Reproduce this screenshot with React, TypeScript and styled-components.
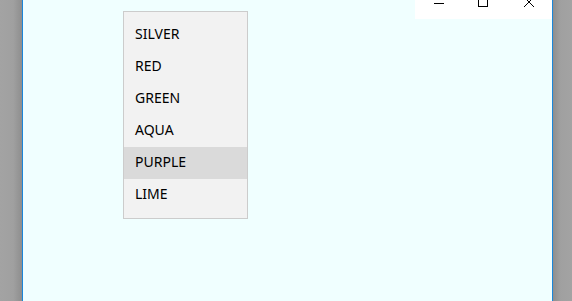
import styled, { createGlobalStyle } from "styled-components"

const GlobalStyle = createGlobalStyle`
  html, body {
    margin: 0;
    padding: 0;
    width: 572px;
    height: 301px;
    overflow: hidden;
  }
  #root {
    height: 100%;
  }
`

const Desktop = styled.div`
  display: flex;
  width: 572px;
  height: 301px;
  background-color: #a0a0a0;
`

const Shadow = styled.div<{ side: "left" | "right" }>`
  width: ${props => props.side === "left" ? 22 : 19}px;
  flex-shrink: 0;
  background: linear-gradient(
    ${props => props.side === "left" ? "to right" : "to left"},
    #a3a3a3 0%,
    #a0a0a0 60%,
    #8e8e8e 100%
  );
`

const Window = styled.div`
  position: relative;
  flex: 1;
  border-left: solid 1px #1a86d9;
  border-right: solid 1px #1a86d9;
  background-color: #f0ffff;
  padding: 11px 0 0 100px;
  font-family: "Noto Sans", "Open Sans", sans-serif;
`

const CaptionButtons = styled.div`
  position: absolute;
  top: 0;
  right: 0;
  display: flex;
  height: 19px;
  background-color: #ffffff;
`

const CaptionButton = styled.div`
  position: relative;
  width: 46px;
  height: 19px;
  overflow: hidden;
  svg {
    position: absolute;
    left: 18px;
    top: -3px;
  }
  &:first-child {
    width: 45px;
    svg {
      left: 19px;
    }
  }
`

const List = styled.div`
  width: 123px;
  padding: 7px 0;
  border: solid 1px #cccccc;
  background-color: #f2f2f2;
`

const Item = styled.div<{ selected?: boolean }>`
  box-sizing: border-box;
  display: flex;
  align-items: center;
  height: 32px;
  padding: 0 0 3px 11px;
  font-size: 14px;
  color: #000000;
  background-color: ${props => props.selected ? "#dadada" : "transparent"};
`

const colors = ["SILVER", "RED", "GREEN", "AQUA", "PURPLE", "LIME"]

export default function App() {
  return (
    <>
      <GlobalStyle />
      <Desktop>
        <Shadow side="left" />
        <Window>
          <CaptionButtons>
            <CaptionButton>
              <svg width="10" height="10" viewBox="0 0 10 10">
                <path d="M0 6.5H10" stroke="#000" strokeWidth="1" />
              </svg>
            </CaptionButton>
            <CaptionButton>
              <svg width="10" height="10" viewBox="0 0 10 10">
                <rect x="0.5" y="0.5" width="9" height="9" fill="none" stroke="#000" strokeWidth="1" />
              </svg>
            </CaptionButton>
            <CaptionButton>
              <svg width="10" height="10" viewBox="0 0 10 10">
                <path d="M0 0L10 10M10 0L0 10" stroke="#000" strokeWidth="1" />
              </svg>
            </CaptionButton>
          </CaptionButtons>
          <List>
            {colors.map(c => (
              <Item key={c} selected={c === "PURPLE"}>{c}</Item>
            ))}
          </List>
        </Window>
        <Shadow side="right" />
      </Desktop>
    </>
  )
}
